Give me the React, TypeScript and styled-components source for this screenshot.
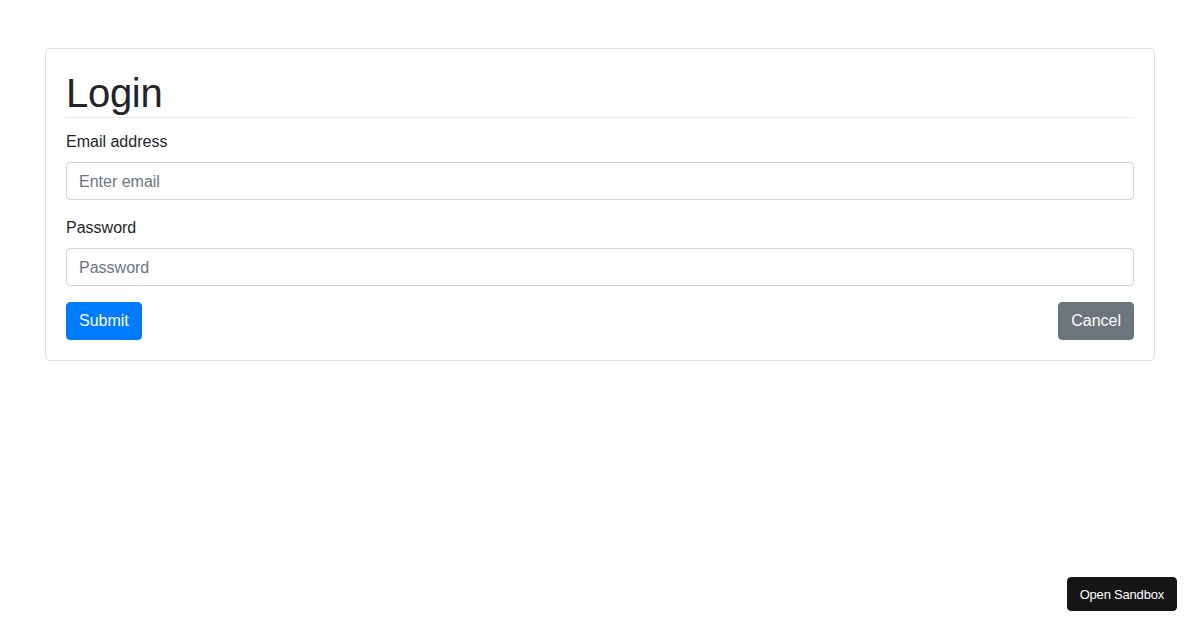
import React from "react";
import styled, { createGlobalStyle } from "styled-components";

const GlobalStyle = createGlobalStyle`
  * {
    box-sizing: border-box;
  }
  body {
    margin: 0;
    background-color: #ffffff;
    color: #212529;
    font-family: "Liberation Sans", Arial, sans-serif;
    font-size: 16px;
    line-height: 1.5;
  }
`;

export default function App() {
    return (
        <>
            <GlobalStyle/>
            <Container>
                <Card>
                    <Title>Login</Title>
                    <FormGroup>
                        <Label htmlFor="email">Email address</Label>
                        <Input id="email" type="email" placeholder="Enter email"/>
                    </FormGroup>
                    <FormGroup>
                        <Label htmlFor="password">Password</Label>
                        <Input id="password" type="password" placeholder="Password"/>
                    </FormGroup>
                    <Actions>
                        <Button variant="primary">Submit</Button>
                        <Button variant="secondary">Cancel</Button>
                    </Actions>
                </Card>
            </Container>
            <SandboxButton>Open Sandbox</SandboxButton>
        </>
    );
}

const Container = styled.div`
  max-width: 1140px;
  margin: 0 auto;
  padding: 48px 15px 0;
`;
const Card = styled.form`
  display: flex;
  flex-direction: column;
  border: 1px solid rgba(0, 0, 0, 0.125);
  border-radius: 4px;
  padding: 20px;
`;
const Title = styled.h1`
  margin: 0 0 12px;
  font-size: 40px;
  font-weight: 500;
  line-height: 48px;
  letter-spacing: -0.3px;
  border-bottom: 1px solid #e9ecef;
`;
const FormGroup = styled.div`
  display: flex;
  flex-direction: column;
  margin-bottom: 16px;
`;
const Label = styled.label`
  margin-bottom: 8px;
  font-size: 16px;
  line-height: 24px;
`;
const Input = styled.input`
  height: 38px;
  padding: 7px 12px 5px;
  font-family: "Liberation Sans", Arial, sans-serif;
  font-size: 16px;
  line-height: 24px;
  color: #495057;
  background-color: #ffffff;
  border: 1px solid #ced4da;
  border-radius: 4px;
  outline: none;

  &::placeholder {
    color: #6c757d;
  }
`;
const Actions = styled.div`
  display: flex;
  flex-direction: row;
  justify-content: space-between;
  align-items: center;
`;
const Button = styled.button<{ variant: "primary" | "secondary" }>`
  height: 38px;
  padding: 6px 12px;
  font-family: "Liberation Sans", Arial, sans-serif;
  font-size: 16px;
  line-height: 24px;
  color: #ffffff;
  border: 1px solid ${p => (p.variant === "primary" ? "#007bff" : "#6c757d")};
  background-color: ${p => (p.variant === "primary" ? "#007bff" : "#6c757d")};
  border-radius: 4px;
  cursor: pointer;
`;
const SandboxButton = styled.button`
  position: fixed;
  right: 23px;
  bottom: 19px;
  height: 34px;
  padding: 0 12px;
  font-family: "Liberation Sans", Arial, sans-serif;
  font-size: 13px;
  letter-spacing: -0.2px;
  color: #ffffff;
  background-color: #151515;
  border: 1px solid #151515;
  border-radius: 4px;
  cursor: pointer;
`;
